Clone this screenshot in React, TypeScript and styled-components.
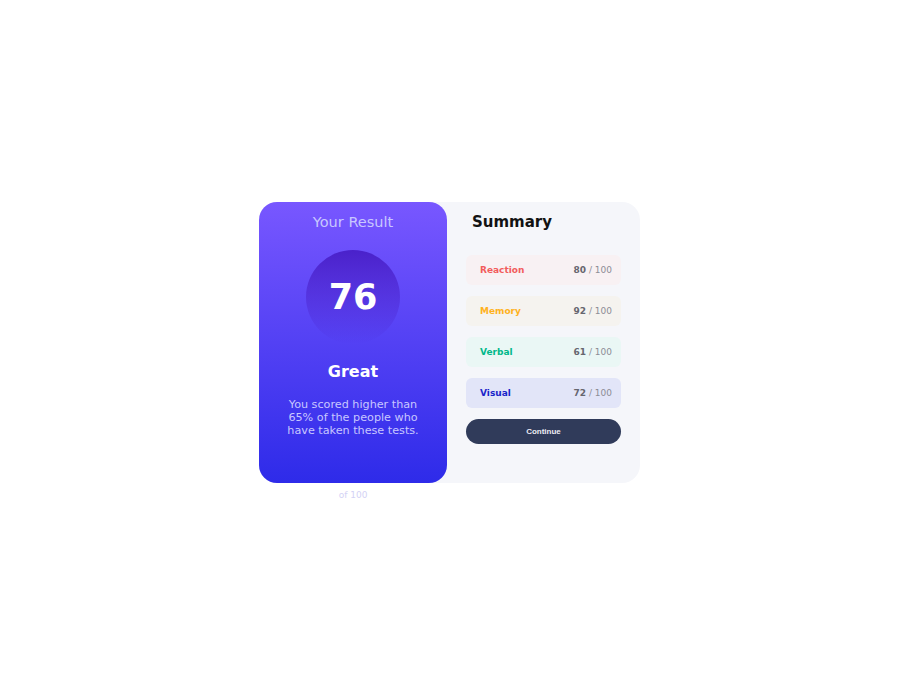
import styled, { createGlobalStyle } from "styled-components";

const GlobalStyle = createGlobalStyle`
  html, body {
    margin: 0;
    padding: 0;
    background: #ffffff;
    font-family: "DejaVu Sans", "Noto Sans", sans-serif;
  }
`;

type Category = {
  name: string;
  score: number;
  color: string;
  tint: string;
};

const categories: Category[] = [
  { name: "Reaction", score: 80, color: "#f25c5c", tint: "#f8f1f3" },
  { name: "Memory", score: 92, color: "#ffb21e", tint: "#f5f3ef" },
  { name: "Verbal", score: 61, color: "#00b88a", tint: "#eaf7f5" },
  { name: "Visual", score: 72, color: "#1a25c9", tint: "#e2e5f8" },
];

const App = () => {
  return (
    <Page>
      <GlobalStyle />
      <Card>
        <ResultPanel>
          <ResultTitle>Your Result</ResultTitle>
          <ScoreCircle>
            <ScoreValue>76</ScoreValue>
          </ScoreCircle>
          <Verdict>Great</Verdict>
          <Blurb>You scored higher than 65% of the people who have taken these tests.</Blurb>
          <OutOf>of 100</OutOf>
        </ResultPanel>
        <SummaryPanel>
          <SummaryTitle>Summary</SummaryTitle>
          <Rows>
            {categories.map((c) => (
              <Row key={c.name} $tint={c.tint}>
                <Label $color={c.color}>{c.name}</Label>
                <Score>
                  <strong>{c.score}</strong> / 100
                </Score>
              </Row>
            ))}
          </Rows>
          <ContinueButton>Continue</ContinueButton>
        </SummaryPanel>
      </Card>
    </Page>
  );
};

export default App;

const Page = styled.div`
  min-height: 100vh;
  box-sizing: border-box;
  padding-top: 10px;
  display: flex;
  align-items: center;
  justify-content: center;
`;

const Card = styled.div`
  display: flex;
  width: 381px;
  height: 281px;
  margin-left: -1px;
  background: #f5f6fa;
  border-radius: 18px;
`;

const ResultPanel = styled.div`
  position: relative;
  width: 188px;
  flex-shrink: 0;
  box-sizing: border-box;
  padding-top: 11px;
  display: flex;
  flex-direction: column;
  align-items: center;
  border-radius: 18px;
  background: linear-gradient(180deg, #7857ff 0%, #2e2be9 100%);
`;

const ResultTitle = styled.h2`
  margin: 0;
  font-size: 14.5px;
  line-height: 18px;
  font-weight: 400;
  color: #c8c7ff;
`;

const ScoreCircle = styled.div`
  margin-top: 19px;
  width: 94px;
  height: 94px;
  border-radius: 50%;
  display: flex;
  align-items: center;
  justify-content: center;
  background: linear-gradient(180deg, rgba(74, 33, 202, 1) 0%, rgba(36, 33, 202, 0) 100%);
`;

const ScoreValue = styled.span`
  font-size: 35px;
  font-weight: 700;
  color: #ffffff;
  line-height: 1;
`;

const Verdict = styled.h3`
  margin: 18px 0 0;
  font-size: 16px;
  line-height: 19px;
  font-weight: 700;
  color: #ffffff;
`;

const Blurb = styled.p`
  margin: 17px 0 0;
  width: 140px;
  font-size: 11.2px;
  line-height: 13px;
  text-align: center;
  color: #c8c7ff;
`;

const OutOf = styled.span`
  position: absolute;
  left: 0;
  right: 0;
  top: calc(100% + 7px);
  text-align: center;
  font-size: 9px;
  color: #d3d2f5;
`;

const SummaryPanel = styled.div`
  flex: 1;
  box-sizing: border-box;
  padding: 10px 19px 0;
  display: flex;
  flex-direction: column;
`;

const SummaryTitle = styled.h2`
  margin: 0 0 23px 6px;
  font-size: 15px;
  line-height: 20px;
  font-weight: 700;
  color: #121212;
`;

const Rows = styled.div`
  display: flex;
  flex-direction: column;
  gap: 11px;
`;

const Row = styled.div<{ $tint: string }>`
  height: 30px;
  box-sizing: border-box;
  padding: 0 9px 0 14px;
  display: flex;
  align-items: center;
  justify-content: space-between;
  border-radius: 6px;
  background: ${(p) => p.$tint};
`;

const Label = styled.span<{ $color: string }>`
  font-size: 9px;
  font-weight: 700;
  color: ${(p) => p.$color};
`;

const Score = styled.span`
  font-size: 9px;
  color: #8d8d96;

  strong {
    color: #66666f;
    font-weight: 700;
  }
`;

const ContinueButton = styled.button`
  margin-top: 11px;
  height: 25px;
  border: none;
  border-radius: 12.5px;
  background: #303b5a;
  color: #ececf4;
  font-family: "Liberation Sans", Arial, sans-serif;
  font-size: 8px;
  font-weight: 700;
  cursor: pointer;
`;
